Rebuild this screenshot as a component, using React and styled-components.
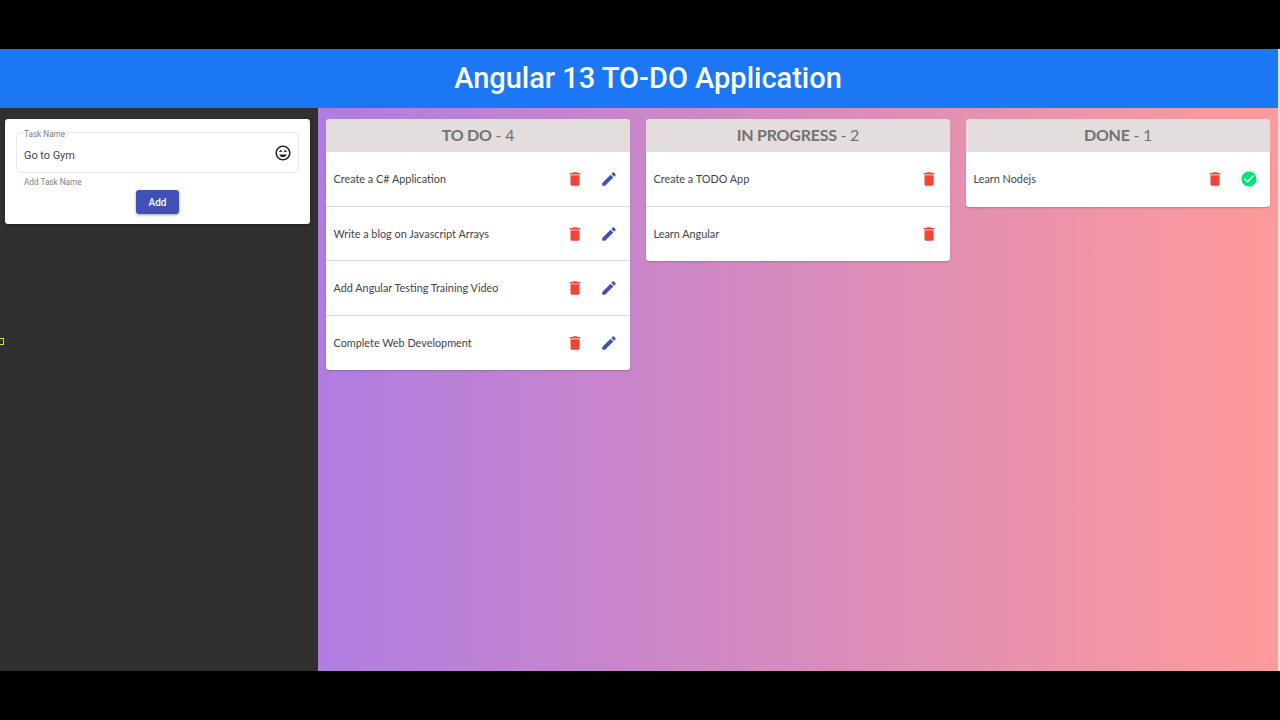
import React from 'react'
import styled, { createGlobalStyle } from 'styled-components'
import { MdDelete, MdEdit, MdCheckCircle, MdOutlineSentimentVerySatisfied } from 'react-icons/md'

const columns = [
  {
    title: 'TO DO',
    tasks: [
      'Create a C# Application',
      'Write a blog on Javascript Arrays',
      'Add Angular Testing Training Video',
      'Complete Web Development',
    ],
    action: 'edit',
  },
  { title: 'IN PROGRESS', tasks: ['Create a TODO App', 'Learn Angular'] },
  { title: 'DONE', tasks: ['Learn Nodejs'], action: 'done' },
]

export default function App() {
  return (
    <Page>
      <GlobalStyle />
      <Header>Angular 13 TO-DO Application</Header>
      <Main>
        <Sidebar>
          <FormCard>
            <Field>
              <FieldLabel>Task Name</FieldLabel>
              <FieldValue>Go to Gym</FieldValue>
              <MdOutlineSentimentVerySatisfied size={18} color="#222" />
            </Field>
            <Hint>Add Task Name</Hint>
            <AddButton>Add</AddButton>
          </FormCard>
          <Marker />
        </Sidebar>
        <Board>
          {columns.map(col => (
            <Column key={col.title}>
              <ColumnTitle>
                <strong>{col.title}</strong> - {col.tasks.length}
              </ColumnTitle>
              <TaskList>
                {col.tasks.map(task => (
                  <Task key={task}>
                    <TaskName>{task}</TaskName>
                    <IconSlot $color="#f44336">
                      <MdDelete size={18} />
                    </IconSlot>
                    {col.action === 'edit' && (
                      <IconSlot $color="#3f51b5">
                        <MdEdit size={18} />
                      </IconSlot>
                    )}
                    {col.action === 'done' && (
                      <IconSlot $color="#00e676">
                        <MdCheckCircle size={18} />
                      </IconSlot>
                    )}
                  </Task>
                ))}
              </TaskList>
            </Column>
          ))}
        </Board>
      </Main>
    </Page>
  )
}

const GlobalStyle = createGlobalStyle`
  html, body {
    margin: 0;
    padding: 0;
    background: #000;
  }
  * {
    box-sizing: border-box;
  }
`

const Page = styled.div`
  width: 1280px;
  height: 720px;
  padding: 49px 2px 49px 0;
  display: flex;
  flex-direction: column;
  overflow: hidden;
  background: linear-gradient(#000 49px, #cfe2fb 49px, #cfe2fb 108px, #ffdcdc 108px, #ffdcdc 671px, #000 671px);
`

const Header = styled.header`
  height: 59px;
  flex: none;
  padding: 0 0 2px 18px;
  display: flex;
  align-items: center;
  justify-content: center;
  background: #1c77f5;
  color: #fff;
  font: 500 29px Roboto, sans-serif;
`

const Main = styled.main`
  flex: 1;
  display: flex;
  min-height: 0;
`

const Sidebar = styled.aside`
  position: relative;
  width: 318px;
  flex: none;
  padding: 11px 8px 0 5px;
  background: #303030;
`

const Marker = styled.span`
  position: absolute;
  left: 0;
  top: 230px;
  width: 4px;
  height: 7px;
  border: 1px solid #c6e84e;
  border-left-width: 0;
`

const FormCard = styled.section`
  height: 105px;
  padding: 6px 11px 0;
  display: flex;
  flex-direction: column;
  background: #fff;
  border-radius: 3px;
  box-shadow: 0 1px 3px rgba(0, 0, 0, 0.4);
`

const Field = styled.fieldset`
  height: 48px;
  margin: 0;
  padding: 5px 6px 0 7px;
  display: flex;
  align-items: center;
  justify-content: space-between;
  border: 1px solid #e8e8e8;
  border-radius: 5px;
`

const FieldLabel = styled.legend`
  padding: 4px 2px 0 0;
  font: 400 8.2px/10px Roboto, sans-serif;
  color: #808080;
`

const FieldValue = styled.span`
  font: 400 10.9px Roboto, sans-serif;
  color: #444;
  margin-top: 4px;
`

const Hint = styled.div`
  margin: 4px 0 0 8px;
  font: 400 8.2px/11px Roboto, sans-serif;
  color: #808080;
`

const AddButton = styled.button`
  width: 43px;
  height: 24px;
  margin: 2px 0 0 120px;
  padding: 0;
  border: none;
  border-radius: 3px;
  background: #3f51b5;
  color: #fff;
  font: 500 10px Roboto, sans-serif;
  box-shadow: 0 1px 3px rgba(0, 0, 0, 0.35);
`

const Board = styled.div`
  flex: 1;
  display: flex;
  align-items: flex-start;
  gap: 16px;
  padding: 11px 8px 0;
  background: linear-gradient(to right, #b07ce2, #ff9a9a);
`

const Column = styled.section`
  width: 304px;
  flex: none;
`

const ColumnTitle = styled.h2`
  height: 33px;
  margin: 0;
  padding-bottom: 2px;
  display: flex;
  align-items: center;
  justify-content: center;
  white-space: pre-wrap;
  background: #e3dddd;
  border-radius: 3px 3px 0 0;
  color: #747171;
  font: 400 16px Lato, sans-serif;
  letter-spacing: -0.25px;

  strong {
    font-weight: 700;
  }
`

const TaskList = styled.ul`
  margin: 0;
  padding: 0;
  list-style: none;
  background: #fff;
  border-radius: 0 0 3px 3px;
  box-shadow: 0 1px 2px rgba(0, 0, 0, 0.2);
`

const Task = styled.li`
  height: 54.5px;
  padding: 0 12px 0 7.5px;
  display: flex;
  align-items: center;
  gap: 16px;
  border-bottom: 1px solid #d8d8d8;

  &:last-child {
    border-bottom-color: transparent;
  }
`

const TaskName = styled.span`
  flex: 1;
  font: 400 10.85px Lato, sans-serif;
  color: #444;
`

const IconSlot = styled.span`
  width: 18px;
  height: 18px;
  margin-top: 1px;
  display: flex;
  color: ${props => props.$color};
`
